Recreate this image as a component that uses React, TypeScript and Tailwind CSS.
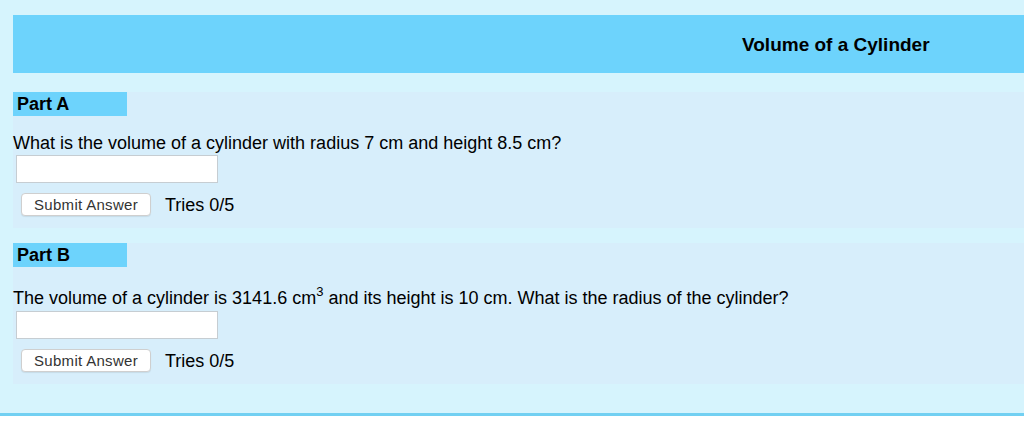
export default function App() {
  return (
    <div
      className="min-h-[425px] bg-white text-black"
      style={{ fontFamily: '"Liberation Sans", Arial, sans-serif' }}
    >
      <div className="bg-[#d6f4fd] pt-[15px] h-[413px]">
        <div className="ml-[13px] h-[58px] bg-[#6dd3fc] flex items-center pl-[729px]">
          <h1 className="text-[19px] font-bold pt-[2px]">Volume of a Cylinder</h1>
        </div>

        <Part
          label="Part A"
          className="mt-[19px]"
          question={
            <p className="mt-[17px] text-[18px] leading-[20px]">
              What is the volume of a cylinder with radius 7 cm and height 8.5 cm?
            </p>
          }
          inputGap="mt-[2px]"
        />

        <Part
          label="Part B"
          className="mt-[15px]"
          question={
            <p className="mt-[21px] text-[18px] leading-[20px]">
              The volume of a cylinder is 3141.6 cm
              <sup className="text-[13px] leading-none relative -top-[8px]">3</sup> and its height
              is 10 cm. What is the radius of the cylinder?
            </p>
          }
          inputGap="mt-[3px]"
        />
      </div>
      <div className="h-[3px] bg-[#72d0f2]" />
    </div>
  );
}

function Part({
  label,
  question,
  className,
  inputGap,
}: {
  label: string;
  question: React.ReactNode;
  className: string;
  inputGap: string;
}) {
  return (
    <div className={`ml-[13px] bg-[#d7eefb] pb-[12px] ${className}`}>
      <div className="w-[114px] h-[24px] bg-[#6dd3fc] flex items-center pl-[4px] text-[18px] font-bold">
        {label}
      </div>
      {question}
      <input
        type="text"
        className={`${inputGap} ml-[3px] block w-[202px] h-[28px] bg-white border border-[#c6cdd2] outline-none`}
      />
      <div className="mt-[10px] ml-[8px] flex items-center gap-[14px] h-[23px]">
        <button className="w-[130px] h-[23px] bg-white border border-[#cfcfcf] rounded-[4px] text-[15px] tracking-[0.02em] text-[#333] shadow-[0_1px_1px_rgba(0,0,0,0.08)]">
          Submit Answer
        </button>
        <span className="text-[18px] leading-[23px] pt-[2px]">Tries 0/5</span>
      </div>
    </div>
  );
}
